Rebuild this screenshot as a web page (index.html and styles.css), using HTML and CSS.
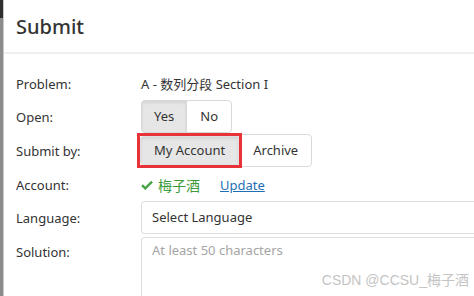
FILE: index.html
```html
<!DOCTYPE html>
<html lang="zh">
  <head>
    <meta charset="UTF-8" />
    <title>Submit</title>
    <link rel="stylesheet" href="styles.css">
  </head>
  <body>
    <div class="page">
      <div class="side-strip"><div class="side-top"></div></div>

      <div class="dialog">
        <div class="dialog-header">
          <h4>Submit</h4>
        </div>

        <div class="dialog-body">
          <div class="form-row">
            <label>Problem:</label>
            <div class="value">A - 数列分段 Section I</div>
          </div>

          <div class="form-row">
            <label>Open:</label>
            <div class="btn-group">
              <span class="btn active">Yes</span>
              <span class="btn">No</span>
            </div>
          </div>

          <div class="form-row">
            <label>Submit by:</label>
            <div class="btn-group">
              <span class="highlight"><span class="btn active">My Account</span></span>
              <span class="btn">Archive</span>
            </div>
          </div>

          <div class="form-row">
            <label>Account:</label>
            <div class="value account">
              <svg class="check" width="12" height="10" viewBox="0 0 12 10">
                <path d="M1 5.2 L4.3 8.4 L11 1.6" fill="none" stroke="#47a447" stroke-width="2.4" />
              </svg>
              <span class="account-name">梅子酒</span>
              <a href="#" class="update-link">Update</a>
            </div>
          </div>

          <div class="form-row">
            <label>Language:</label>
            <div class="select">Select Language</div>
          </div>

          <div class="form-row top">
            <label>Solution:</label>
            <div class="textarea">At least 50 characters</div>
          </div>
        </div>
      </div>
    </div>

    <div class="watermark">CSDN @CCSU_梅子酒</div>
  </body>
</html>
```

FILE: styles.css
```css
body {
  margin: 0;
  font-family: "Noto Sans", "Noto Sans CJK SC", sans-serif;
  color: #333;
  background: #fff;
  overflow: hidden;
}
.page {
  display: flex;
  height: 296px;
  overflow: hidden;
}
.side-strip {
  width: 3px;
  background-color: #8c8c8c;
  border-right: 1px solid #c8c8c8;
}
.side-top {
  height: 18px;
  background-color: #2e2e2e;
}
.dialog {
  flex: 1;
}
.dialog-header {
  height: 52px;
  border-bottom: 2px solid #f0f0f0;
  padding-left: 12px;
  display: flex;
  align-items: center;
}
.dialog-header h4 {
  margin: 0;
  font-size: 20px;
  font-weight: 500;
  color: #333;
}
.dialog-body {
  padding: 13px 0 0 12px;
}
.form-row {
  display: grid;
  grid-template-columns: 125px 1fr;
  align-items: center;
  min-height: 33px;
  font-size: 13px;
}
.form-row.top {
  align-items: start;
  margin-top: 3px;
}
.form-row.top label {
  padding-top: 6px;
}
.value {
  display: flex;
  align-items: center;
}
/* Кнопки-переключатели */
.btn-group {
  display: flex;
  align-items: center;
}
.btn {
  display: inline-block;
  padding: 6px 13px;
  border: 1px solid #d9d9d9;
  background-color: #fff;
  line-height: 19px;
  margin-left: -1px;
}
.btn-group > .btn:first-child {
  padding: 6px 12px;
}
.highlight + .btn:last-child {
  padding: 6px 13px;
}
.btn:first-child {
  margin-left: 0;
  border-radius: 4px 0 0 4px;
}
.btn:last-child {
  border-radius: 0 4px 4px 0;
}
.btn.active {
  background-color: #e6e6e6;
  box-shadow: inset 0 2px 3px rgba(0, 0, 0, 0.08);
}
.highlight {
  display: inline-block;
  border: 3px solid #e8323a;
  margin: 0 -2px 0 -4px;
  position: relative;
  z-index: 1;
}
.highlight .btn {
  border-radius: 3px 0 0 3px;
  padding: 4px 13px;
  border-color: #e0e0e0;
}
.account {
  color: #3b9b3b;
}
.check {
  margin-right: 5px;
}
.account-name {
  font-size: 14px;
}
.update-link {
  margin-left: 20px;
  color: #1f6fb5;
  text-decoration: underline;
}
.select,
.textarea {
  border: 1px solid #dedede;
  border-right: none;
  border-radius: 4px 0 0 4px;
  padding: 6px 10px;
  line-height: 19px;
}
.textarea {
  color: #a5a5a5;
  padding-top: 3px;
  height: 60px;
}
.watermark {
  position: absolute;
  right: 5px;
  bottom: 7px;
  font-size: 14px;
  color: #c4c4c4;
  font-family: "Liberation Sans", "Noto Sans CJK SC", sans-serif;
}
```
